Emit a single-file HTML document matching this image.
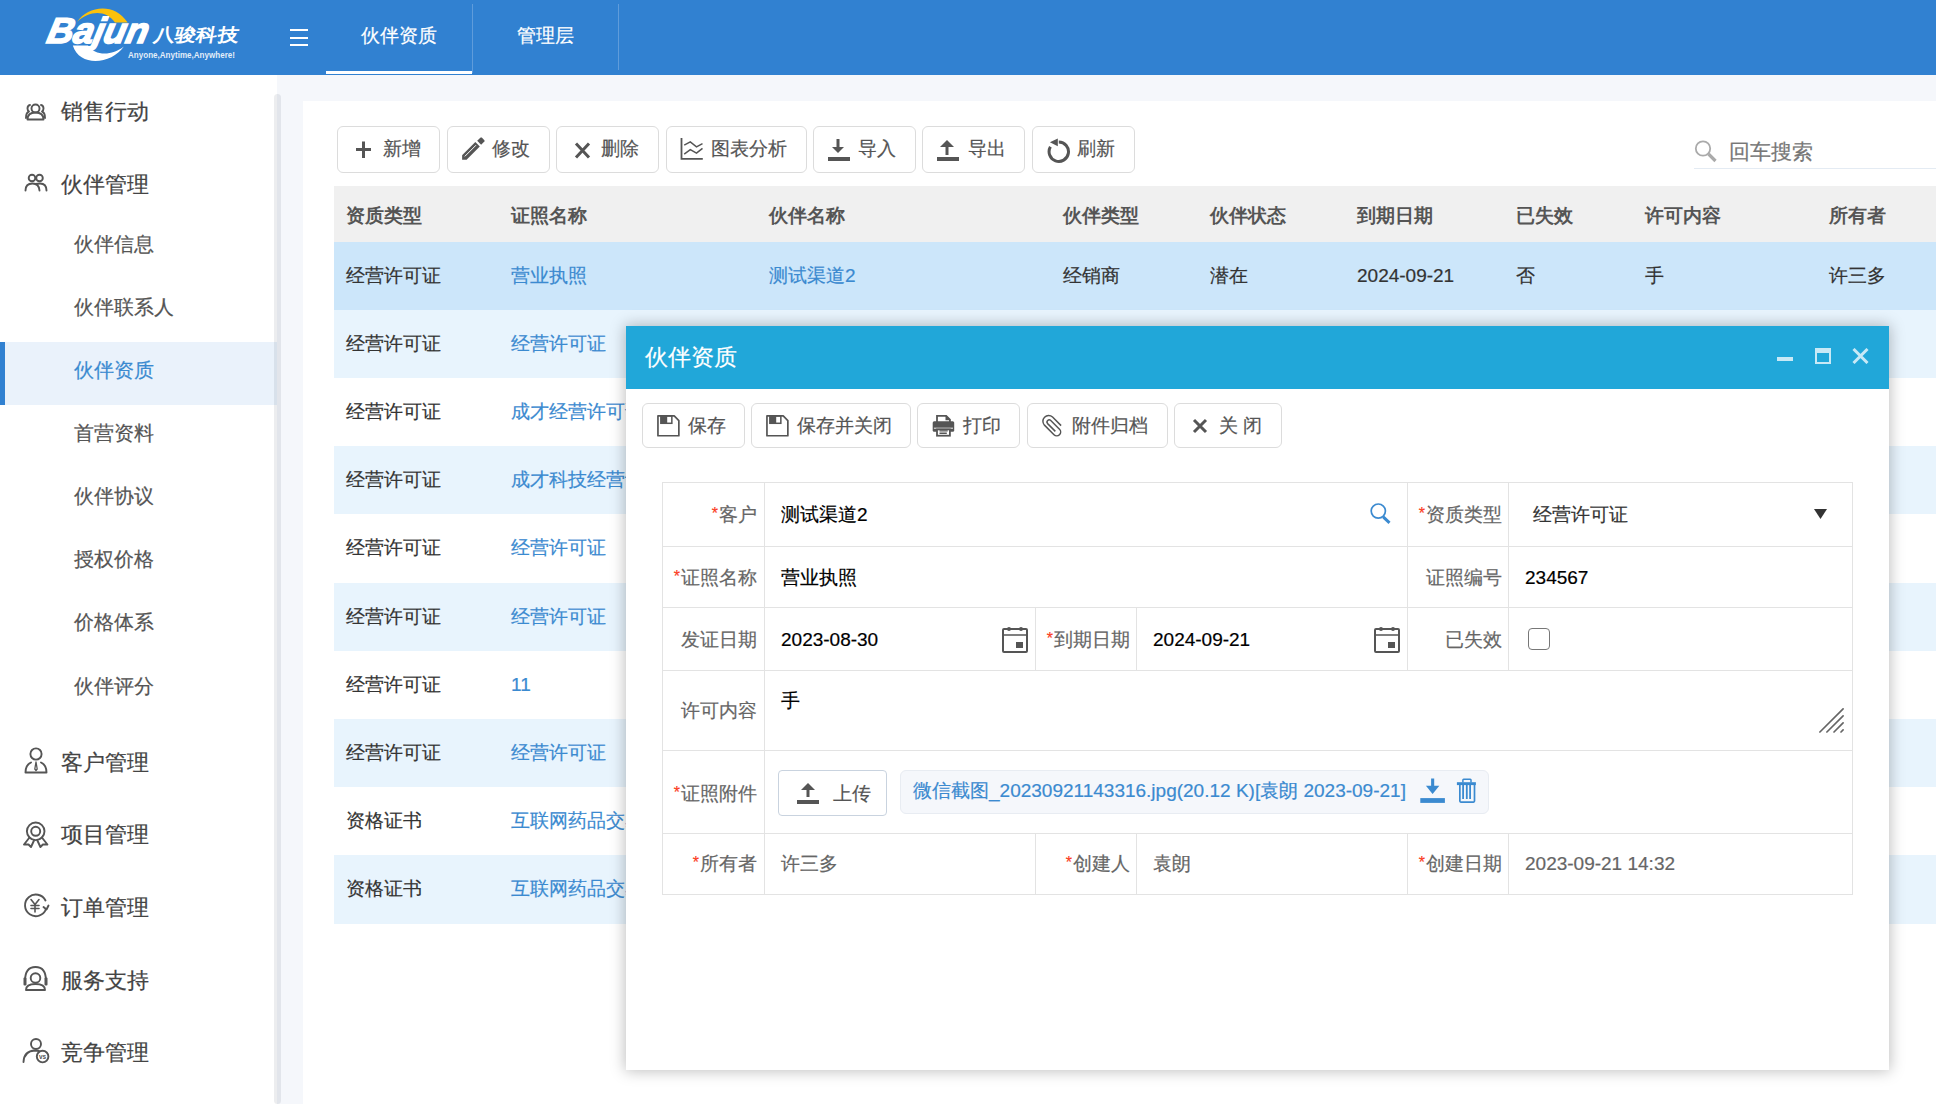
<!DOCTYPE html>
<html><head><meta charset="utf-8">
<style>
*{box-sizing:border-box;margin:0;padding:0}
html,body{-webkit-text-stroke:0.2px currentColor;width:1936px;height:1104px;overflow:hidden;background:#fff;font-family:"Liberation Sans",sans-serif;color:#333}
.a{position:absolute;white-space:nowrap}
#hdr{position:absolute;left:0;top:0;width:1936px;height:75px;background:#3181d1}
#side{position:absolute;left:0;top:75px;width:277px;height:1029px;background:#fff}

#sbar{position:absolute;left:274px;top:94px;width:7px;height:1010px;background:rgba(40,50,80,0.09);border-radius:3.5px;z-index:5}
#bg{position:absolute;left:277px;top:75px;width:1659px;height:1029px;background:#f5f7fb}
#panel{position:absolute;left:303px;top:101px;width:1633px;height:1003px;background:#fff}
.mi{position:absolute;left:61px;font-size:22px;color:#444}
.si{position:absolute;left:74px;font-size:20px;color:#555}
.btn{position:absolute;top:126px;height:47px;border:1px solid #dcdcdc;border-radius:6px;background:#fff}
.btn span{position:absolute;top:9px;font-size:19px;color:#555}
.btn svg{position:absolute}
.th{position:absolute;top:203px;font-size:19px;font-weight:bold;color:#555;-webkit-text-stroke:0}
.row{position:absolute;left:334px;width:1602px;height:68px}
.td{position:absolute;font-size:19px;color:#333;margin-top:-1px}
.lk{color:#3b8ad0}
.lbl{font-size:19px;color:#666}
.req{color:#fb3b1e;font-size:16px;position:relative;top:-2px;margin-right:1px}
.val{font-size:19px}
</style></head><body>
<div id="hdr">
<svg class="a" style="left:0px;top:0px;-webkit-text-stroke:0" width="260" height="74" viewBox="0 0 260 74">
 <path d="M77 22 C 88 6, 114 2, 127.7 22.6 L115 22.6 C 106 10, 90 10, 77 22 Z" fill="#fbc10c"/>
 <g transform="translate(45.5 43) skewX(-12)"><text x="0" y="0" font-family="Liberation Sans" font-weight="bold" font-style="italic" font-size="36" fill="#fff" stroke="#fff" stroke-width="1.6" textLength="101" lengthAdjust="spacingAndGlyphs">Bajun</text></g>
 <path d="M72.8 45.5 L88 45.5 C 95 56, 112 56, 123.8 46.5 C 112 64, 80 68, 72.8 45.5 Z" fill="#fff"/>
 <text x="153" y="41" font-weight="bold" font-size="21" fill="#fff" textLength="85" lengthAdjust="spacingAndGlyphs" transform="translate(153 41) skewX(-10) scale(1 0.86) translate(-153 -41)">八骏科技</text>
 <text x="128" y="58" font-size="9.5" font-weight="bold" fill="#fff" fill-opacity="0.88" textLength="107" lengthAdjust="spacingAndGlyphs">Anyone,Anytime,Anywhere!</text>
</svg>
<div class="a" style="left:290px;top:29px;width:18px;height:2px;background:#fff"></div>
<div class="a" style="left:290px;top:37px;width:18px;height:2px;background:#fff"></div>
<div class="a" style="left:290px;top:44px;width:18px;height:2px;background:#fff"></div>
<div class="a" style="left:326px;top:0;width:146px;height:74px;color:#fff;font-size:19px;text-align:center;line-height:72px">伙伴资质</div>
<div class="a" style="left:326px;top:71px;width:146px;height:3px;background:#fff"></div>
<div class="a" style="left:472px;top:4px;width:1px;height:69px;background:#5f9cdb"></div>
<div class="a" style="left:473px;top:0;width:145px;height:74px;color:#fff;font-size:19px;text-align:center;line-height:72px">管理层</div>
<div class="a" style="left:618px;top:4px;width:1px;height:66px;background:#5f9cdb"></div>
</div>
<div id="bg"></div>
<div id="side"></div>
<svg class="a" style="left:20px;top:100px" width="32" height="32" viewBox="0 0 32 32" fill="none" stroke="#555" stroke-width="1.9" stroke-linecap="round" stroke-linejoin="round"><circle cx="15.5" cy="8.5" r="4"/><path d="M7.5 19.5 Q7.5 12.5 15.5 12.5 Q23.5 12.5 23.5 19.5 Z"/><path d="M10 5 Q7.5 5.5 7.5 8.5 Q7.5 10.5 9 11.5 Q6 12.5 6 18"/><path d="M21 5 Q23.5 5.5 23.5 8.5 Q23.5 10.5 22 11.5 Q25 12.5 25 18"/></svg><div class="mi a" style="top:97px">销售行动</div><svg class="a" style="left:20px;top:170px" width="32" height="32" viewBox="0 0 32 32" fill="none" stroke="#555" stroke-width="1.9" stroke-linecap="round" stroke-linejoin="round"><circle cx="12" cy="8" r="3.3"/><circle cx="19.5" cy="8" r="3.3"/><path d="M5.5 20.5 Q5.5 13.5 12.5 13.5 Q19 13.5 19.5 20.5"/><path d="M16 14 Q17.5 13.5 20 13.5 Q26.5 13.5 26.5 20.5"/></svg><div class="mi a" style="top:170px">伙伴管理</div><div class="si a" style="top:231px">伙伴信息</div><div class="si a" style="top:294px">伙伴联系人</div><div class="a" style="left:0;top:342px;width:277px;height:63px;background:#eaf2fb"></div><div class="a" style="left:0;top:342px;width:5px;height:63px;background:#3181d1"></div><div class="si a" style="top:357px;color:#3b8ad0">伙伴资质</div><div class="si a" style="top:420px">首营资料</div><div class="si a" style="top:483px">伙伴协议</div><div class="si a" style="top:546px">授权价格</div><div class="si a" style="top:609px">价格体系</div><div class="si a" style="top:673px">伙伴评分</div><svg class="a" style="left:20px;top:744px" width="32" height="32" viewBox="0 0 32 32" fill="none" stroke="#555" stroke-width="1.9" stroke-linecap="round" stroke-linejoin="round"><circle cx="16" cy="10" r="5.6"/><path d="M11 18.5 Q5.5 21 5.5 28.5 H26.5 Q26.5 21 21 18.5"/><path d="M16 18 L14.8 25 L16 26.5 L17.2 25 Z" stroke-width="1.3"/></svg><div class="mi a" style="top:748px">客户管理</div><svg class="a" style="left:20px;top:818px" width="32" height="32" viewBox="0 0 32 32" fill="none" stroke="#555" stroke-width="1.9" stroke-linecap="round" stroke-linejoin="round"><circle cx="15.7" cy="13.3" r="8.8"/><circle cx="15.7" cy="13.3" r="4.5"/><path d="M9.5 19.5 L4 26.5 L8.5 26.5 L11 29 L14 22.5"/><path d="M21.9 19.5 L27.4 26.5 L22.9 26.5 L20.4 29 L17.4 22.5"/></svg><div class="mi a" style="top:820px">项目管理</div><svg class="a" style="left:20px;top:890px" width="32" height="32" viewBox="0 0 32 32" fill="none" stroke="#555" stroke-width="1.9" stroke-linecap="round" stroke-linejoin="round"><path d="M25.5 10.5 A10.8 10.8 0 1 0 26 19"/><path d="M23.5 17 L26.5 19.5 L28.5 15.5"/><path d="M11 9.5 L15 14.5 L19 9.5 M15 14.5 V22 M11 15.5 H19 M11 18.5 H19" stroke-width="1.6"/></svg><div class="mi a" style="top:893px">订单管理</div><svg class="a" style="left:20px;top:962px" width="32" height="32" viewBox="0 0 32 32" fill="none" stroke="#555" stroke-width="1.9" stroke-linecap="round" stroke-linejoin="round"><path d="M5 19 Q5 5 15.5 5 Q26 5 26 19"/><rect x="3.5" y="15.5" width="3" height="8" rx="1" fill="#555" stroke="none"/><rect x="24.5" y="15.5" width="3" height="8" rx="1" fill="#555" stroke="none"/><circle cx="15.5" cy="16" r="4.8"/><path d="M6 28 Q6 22 15.5 22 Q25 22 25 28 Z"/></svg><div class="mi a" style="top:966px">服务支持</div><svg class="a" style="left:20px;top:1034px" width="32" height="32" viewBox="0 0 32 32" fill="none" stroke="#555" stroke-width="1.9" stroke-linecap="round" stroke-linejoin="round"><circle cx="16" cy="10" r="5"/><path d="M3.5 28 Q4 17 15 16.5 Q17.5 16.5 19 17"/><circle cx="22.6" cy="22.6" r="5.8"/><text x="19" y="25" font-size="6.5" font-weight="bold" fill="#555" stroke="none">vs</text></svg><div class="mi a" style="top:1038px">竞争管理</div><div id="sbar"></div>
<div id="panel"></div>
<div class="btn" style="left:337px;width:103px"><svg style="left:17px;top:13px" width="17" height="18" viewBox="0 0 17 18"><path d="M8.5 1.5V18M1 9.5H16" stroke="#555" stroke-width="3"/></svg><span style="left:45px">新增</span></div><div class="btn" style="left:447px;width:103px"><svg style="left:13px;top:10px" width="25" height="25" viewBox="0 0 25 25"><path d="M1.1 22.7 L1.1 18.2 L14.3 4.9 L18.8 9.4 L5.6 22.7 Z" fill="#555"/><path d="M3.8 19.4 L15 8.2" stroke="#fff" stroke-width="1"/><path d="M16.2 3.8 L19.6 0.6 Q20.2 0.2 20.8 0.6 L23.4 3.2 Q23.8 3.8 23.4 4.4 L20.1 7.7 Z" fill="#555"/></svg><span style="left:44px">修改</span></div><div class="btn" style="left:556px;width:103px"><svg style="left:17px;top:15px" width="17" height="17" viewBox="0 0 17 17"><path d="M2 1.5L15 15.5M15 1.5L2 15.5" stroke="#555" stroke-width="3"/></svg><span style="left:44px">删除</span></div><div class="btn" style="left:666px;width:141px"><svg style="left:13px;top:10px" width="25" height="25" viewBox="0 0 25 25"><path d="M1.5 1 V21.9 H22.8" fill="none" stroke="#555" stroke-width="1.8"/><path d="M4.2 8.1 L10.3 4.8 L16.5 9.8 L22.5 6.7 M4.2 17.2 L10.3 12.7 L16.5 16.2 L22.5 11.3" fill="none" stroke="#555" stroke-width="1.5"/></svg><span style="left:44px">图表分析</span></div><div class="btn" style="left:813px;width:103px"><svg style="left:12px;top:11px" width="24" height="24" viewBox="0 0 24 24"><path d="M12 1V12" stroke="#555" stroke-width="3"/><path d="M6 9 L12 15 L18 9Z" fill="#555"/><rect x="2" y="19" width="22" height="4" fill="#555"/></svg><span style="left:44px">导入</span></div><div class="btn" style="left:922px;width:103px"><svg style="left:12px;top:11px" width="24" height="24" viewBox="0 0 24 24"><path d="M12 7V17" stroke="#555" stroke-width="3"/><path d="M5 9 L12 2 L19 9Z" fill="#555"/><rect x="2" y="19" width="22" height="4" fill="#555"/></svg><span style="left:45px">导出</span></div><div class="btn" style="left:1032px;width:103px"><svg style="left:12px;top:10px" width="26" height="26" viewBox="0 0 26 26"><path d="M13.8 5 A9.7 9.7 0 1 1 5.4 9.85" fill="none" stroke="#555" stroke-width="3"/><path d="M4.9 5.2 L12.8 1.4 L12.8 9.2 Z" fill="#555"/></svg><span style="left:44px">刷新</span></div>
<svg class="a" style="left:1694px;top:139px" width="24" height="24" viewBox="0 0 24 24"><circle cx="9" cy="9.5" r="7.2" fill="none" stroke="#aaa" stroke-width="1.8"/><path d="M14.5 15 L21.5 22" stroke="#aaa" stroke-width="3.2" stroke-linecap="butt"/></svg>
<div class="a" style="left:1729px;top:138px;font-size:21px;color:#777">回车搜索</div>
<div class="a" style="left:1694px;top:168px;width:242px;height:1px;background:#e4ebf3"></div>
<div class="a" style="left:334px;top:186px;width:1602px;height:56px;background:#f0f0f0"></div><div class="th" style="left:346px">资质类型</div><div class="th" style="left:511px">证照名称</div><div class="th" style="left:769px">伙伴名称</div><div class="th" style="left:1063px">伙伴类型</div><div class="th" style="left:1210px">伙伴状态</div><div class="th" style="left:1357px">到期日期</div><div class="th" style="left:1516px">已失效</div><div class="th" style="left:1645px">许可内容</div><div class="th" style="left:1829px">所有者</div><div class="row" style="top:242px;height:68px;background:#cce6fa"><div class="td" style="left:12px;top:22px">经营许可证</div><div class="td lk" style="left:177px;top:22px">营业执照</div><div class="td lk" style="left:435px;top:22px">测试渠道2</div><div class="td" style="left:729px;top:22px">经销商</div><div class="td" style="left:876px;top:22px">潜在</div><div class="td" style="left:1023px;top:24px">2024-09-21</div><div class="td" style="left:1182px;top:22px">否</div><div class="td" style="left:1311px;top:22px">手</div><div class="td" style="left:1495px;top:22px">许三多</div></div><div class="row" style="top:310px;height:68px;background:#e8f4fd"><div class="td" style="left:12px;top:22px">经营许可证</div><div class="td lk" style="left:177px;top:22px">经营许可证</div></div><div class="row" style="top:378px;height:68px;background:#fff"><div class="td" style="left:12px;top:22px">经营许可证</div><div class="td lk" style="left:177px;top:22px">成才经营许可证</div></div><div class="row" style="top:446px;height:68px;background:#e8f4fd"><div class="td" style="left:12px;top:22px">经营许可证</div><div class="td lk" style="left:177px;top:22px">成才科技经营许可证</div></div><div class="row" style="top:514px;height:68px;background:#fff"><div class="td" style="left:12px;top:22px">经营许可证</div><div class="td lk" style="left:177px;top:22px">经营许可证</div></div><div class="row" style="top:583px;height:68px;background:#e8f4fd"><div class="td" style="left:12px;top:22px">经营许可证</div><div class="td lk" style="left:177px;top:22px">经营许可证</div></div><div class="row" style="top:651px;height:68px;background:#fff"><div class="td" style="left:12px;top:22px">经营许可证</div><div class="td lk" style="left:177px;top:24px">11</div></div><div class="row" style="top:719px;height:68px;background:#e8f4fd"><div class="td" style="left:12px;top:22px">经营许可证</div><div class="td lk" style="left:177px;top:22px">经营许可证</div></div><div class="row" style="top:787px;height:68px;background:#fff"><div class="td" style="left:12px;top:22px">资格证书</div><div class="td lk" style="left:177px;top:22px">互联网药品交易服务</div></div><div class="row" style="top:855px;height:69px;background:#e8f4fd"><div class="td" style="left:12px;top:22px">资格证书</div><div class="td lk" style="left:177px;top:22px">互联网药品交易服务</div></div>
<div class="a" style="left:626px;top:326px;width:1263px;height:744px;background:#fff;box-shadow:0 0 14px 1px rgba(0,0,0,0.26)"></div>
<div class="a" style="left:626px;top:326px;width:1263px;height:63px;background:#21a7d9"></div>
<div class="a" style="left:645px;top:342px;font-size:23px;color:#fff">伙伴资质</div>
<div class="a" style="left:1777px;top:357px;width:16px;height:4px;background:#c8e9f6"></div>
<div class="a" style="left:1815px;top:348px;width:16px;height:16px;border:2px solid #c8e9f6;border-top-width:5px"></div>
<svg class="a" style="left:1852px;top:348px" width="17" height="16" viewBox="0 0 17 16"><path d="M1.5 1 L15.5 15 M15.5 1 L1.5 15" stroke="#c8e9f6" stroke-width="3"/></svg>
<div class="btn" style="left:642px;top:403px;width:103px;height:45px"><svg style="left:14px;top:11px" width="23" height="23" viewBox="0 0 23 23"><path d="M0.95 0.95 H17.2 L21.85 5.6 V20.75 H0.95 Z" fill="none" stroke="#555" stroke-width="1.7" stroke-linejoin="round"/><rect x="4.05" y="0.9" width="10.8" height="7.4" fill="none" stroke="#555" stroke-width="1.5"/><rect x="3.3" y="0.5" width="6.9" height="8.5" fill="#555"/></svg><span style="left:45px;top:9px">保存</span></div><div class="btn" style="left:751px;top:403px;width:160px;height:45px"><svg style="left:14px;top:11px" width="23" height="23" viewBox="0 0 23 23"><path d="M0.95 0.95 H17.2 L21.85 5.6 V20.75 H0.95 Z" fill="none" stroke="#555" stroke-width="1.7" stroke-linejoin="round"/><rect x="4.05" y="0.9" width="10.8" height="7.4" fill="none" stroke="#555" stroke-width="1.5"/><rect x="3.3" y="0.5" width="6.9" height="8.5" fill="#555"/></svg><span style="left:45px;top:9px">保存并关闭</span></div><div class="btn" style="left:917px;top:403px;width:103px;height:45px"><svg style="left:13px;top:10px" width="25" height="24" viewBox="0 0 25 24"><path d="M6 9 V1.8 H15.2 L18.9 5.5 V9" fill="none" stroke="#555" stroke-width="1.8"/><path d="M14.5 0.9 L19.8 6.2 L14.5 6.2 Z" fill="#555"/><rect x="1.7" y="7.2" width="21.5" height="10.6" rx="1.5" fill="#555"/><path d="M2.9 14.2 H22" stroke="#fff" stroke-width="0.9"/><rect x="6" y="15.4" width="12.9" height="6.3" fill="#fff" stroke="#555" stroke-width="1.8"/><path d="M8.5 16.9 H16.7 M8.5 19.3 H15.8" stroke="#555" stroke-width="1.4"/></svg><span style="left:45px;top:9px">打印</span></div><div class="btn" style="left:1027px;top:403px;width:141px;height:45px"><svg style="left:13px;top:10px" width="26" height="26" viewBox="0 0 26 26"><path d="M20.11 11.6 L11.55 3.05 A5.73 5.73 0 0 0 3.45 11.15 L12.99 20.7 A3.89 3.89 0 0 0 18.5 15.2 L9.77 6.47 A2.23 2.23 0 0 0 6.62 9.62 L14.36 17.35" fill="none" stroke="#555" stroke-width="1.5" stroke-linecap="butt"/></svg><span style="left:44px;top:9px">附件归档</span></div><div class="btn" style="left:1174px;top:403px;width:108px;height:45px"><svg style="left:17px;top:14px" width="16" height="16" viewBox="0 0 16 16"><path d="M2 2L14 14M14 2L2 14" stroke="#555" stroke-width="3"/></svg><span style="left:44px;top:9px">关&nbsp;闭</span></div>
<div class="a" style="left:662px;top:482px;width:1191px;height:1px;background:#e3e3e3"></div><div class="a" style="left:662px;top:546px;width:1191px;height:1px;background:#e3e3e3"></div><div class="a" style="left:662px;top:607px;width:1191px;height:1px;background:#e3e3e3"></div><div class="a" style="left:662px;top:670px;width:1191px;height:1px;background:#e3e3e3"></div><div class="a" style="left:662px;top:750px;width:1191px;height:1px;background:#e3e3e3"></div><div class="a" style="left:662px;top:833px;width:1191px;height:1px;background:#e3e3e3"></div><div class="a" style="left:662px;top:894px;width:1191px;height:1px;background:#e3e3e3"></div><div class="a" style="left:662px;top:482px;width:1px;height:413px;background:#e3e3e3"></div><div class="a" style="left:1852px;top:482px;width:1px;height:413px;background:#e3e3e3"></div><div class="a" style="left:764px;top:482px;width:1px;height:413px;background:#e3e3e3"></div><div class="a" style="left:1407px;top:482px;width:1px;height:189px;background:#e3e3e3"></div><div class="a" style="left:1508px;top:482px;width:1px;height:189px;background:#e3e3e3"></div><div class="a" style="left:1035px;top:607px;width:1px;height:64px;background:#e3e3e3"></div><div class="a" style="left:1136px;top:607px;width:1px;height:64px;background:#e3e3e3"></div><div class="a" style="left:1035px;top:833px;width:1px;height:62px;background:#e3e3e3"></div><div class="a" style="left:1136px;top:833px;width:1px;height:62px;background:#e3e3e3"></div><div class="a" style="left:1407px;top:833px;width:1px;height:62px;background:#e3e3e3"></div><div class="a" style="left:1508px;top:833px;width:1px;height:62px;background:#e3e3e3"></div><div class="a lbl" style="right:1179px;top:502px"><span class="req">*</span>客户</div><div class="a val" style="left:781px;top:502px;color:#000">测试渠道2</div><svg class="a" style="left:1369px;top:502px" width="24" height="24" viewBox="0 0 24 24"><circle cx="9.3" cy="9.1" r="7.1" fill="none" stroke="#3b8ad0" stroke-width="1.7"/><path d="M14.2 14.8 L20.5 20.8" stroke="#3b8ad0" stroke-width="3"/></svg><div class="a lbl" style="right:434px;top:502px"><span class="req">*</span>资质类型</div><div class="a val" style="left:1533px;top:502px;color:#333">经营许可证</div><svg class="a" style="left:1814px;top:509px" width="13" height="10" viewBox="0 0 13 10"><path d="M0 0H13L6.5 10Z" fill="#333"/></svg><div class="a lbl" style="right:1179px;top:565px"><span class="req">*</span>证照名称</div><div class="a val" style="left:781px;top:565px;color:#000">营业执照</div><div class="a lbl" style="right:434px;top:565px">证照编号</div><div class="a val" style="left:1525px;top:567px;color:#000">234567</div><div class="a lbl" style="right:1179px;top:627px">发证日期</div><div class="a val" style="left:781px;top:629px;color:#000">2023-08-30</div><svg class="a" style="left:1002px;top:626px" width="26" height="27" viewBox="0 0 26 27"><rect x="1" y="3" width="24" height="23" rx="1" fill="none" stroke="#555" stroke-width="2"/><path d="M1 9H25" stroke="#555" stroke-width="1.5"/><circle cx="7" cy="3" r="2" fill="#555"/><circle cx="19" cy="3" r="2" fill="#555"/><rect x="14" y="16" width="7" height="6" fill="#555"/></svg><div class="a lbl" style="right:806px;top:627px"><span class="req">*</span>到期日期</div><div class="a val" style="left:1153px;top:629px;color:#000">2024-09-21</div><svg class="a" style="left:1374px;top:626px" width="26" height="27" viewBox="0 0 26 27"><rect x="1" y="3" width="24" height="23" rx="1" fill="none" stroke="#555" stroke-width="2"/><path d="M1 9H25" stroke="#555" stroke-width="1.5"/><circle cx="7" cy="3" r="2" fill="#555"/><circle cx="19" cy="3" r="2" fill="#555"/><rect x="14" y="16" width="7" height="6" fill="#555"/></svg><div class="a lbl" style="right:434px;top:627px">已失效</div><div class="a" style="left:1528px;top:628px;width:22px;height:22px;border:1px solid #777;border-radius:4px;background:#fff"></div><div class="a lbl" style="right:1179px;top:698px">许可内容</div><div class="a val" style="left:781px;top:688px;color:#000">手</div><svg class="a" style="left:1817px;top:707px" width="28" height="28" viewBox="0 0 28 28"><path d="M2.9 25 L26.1 1.8 M9.9 25 L26.1 8.9 M17 25 L26.1 15.9 M24 25 L26.1 22.9" stroke="#666" stroke-width="1.7" stroke-linecap="round"/></svg><div class="a lbl" style="right:1179px;top:781px"><span class="req">*</span>证照附件</div><div class="a" style="left:778px;top:770px;width:109px;height:46px;border:1px solid #c9d3df;border-radius:4px;background:#fff">
<svg style="position:absolute;left:17px;top:11px" width="24" height="22" viewBox="0 0 24 22"><path d="M12 6V15" stroke="#555" stroke-width="3"/><path d="M5 8 L12 1 L19 8Z" fill="#555"/><rect x="1" y="18" width="22" height="4" fill="#555"/></svg>
<span style="position:absolute;left:54px;top:10px;font-size:19px;color:#555">上传</span></div>
<div class="a" style="left:900px;top:770px;width:589px;height:44px;border:1px solid #e8ecf2;border-radius:6px;background:#f5f7fb"></div>
<div class="a" style="left:913px;top:778px;font-size:19px;color:#3b8ad0">微信截图_20230921143316.jpg(20.12 K)[袁朗 2023-09-21]</div>
<svg class="a" style="left:1420px;top:776px" width="26" height="28" viewBox="0 0 26 28"><path d="M12.65 2.5 V10.5" stroke="#3b8ad0" stroke-width="3.1"/><path d="M5.9 9.7 L19.3 9.7 L12.6 18 Z" fill="#3b8ad0"/><rect x="0.3" y="22.1" width="24.6" height="4.8" fill="#3b8ad0"/></svg>
<svg class="a" style="left:1455px;top:776px" width="24" height="28" viewBox="0 0 24 28"><rect x="1.9" y="6.2" width="19" height="2.9" fill="#3b8ad0"/><path d="M7.9 6.5 V4 Q7.9 3.25 8.65 3.25 H15.25 Q16 3.25 16 4 V6.5" fill="none" stroke="#3b8ad0" stroke-width="1.5"/><path d="M4.85 9 V25.1 Q4.85 26.05 5.8 26.05 H18.55 Q19.5 26.05 19.5 25.1 V9" fill="none" stroke="#3b8ad0" stroke-width="1.7"/><path d="M8.1 9 V23.1 M11.8 9 V23.1 M15.1 9 V23.1" stroke="#3b8ad0" stroke-width="1.8"/></svg>
<div class="a lbl" style="right:1179px;top:851px"><span class="req">*</span>所有者</div><div class="a val" style="left:781px;top:851px;color:#666">许三多</div><div class="a lbl" style="right:806px;top:851px"><span class="req">*</span>创建人</div><div class="a val" style="left:1153px;top:851px;color:#666">袁朗</div><div class="a lbl" style="right:434px;top:851px"><span class="req">*</span>创建日期</div><div class="a val" style="left:1525px;top:853px;color:#666">2023-09-21 14:32</div>
</body></html>
